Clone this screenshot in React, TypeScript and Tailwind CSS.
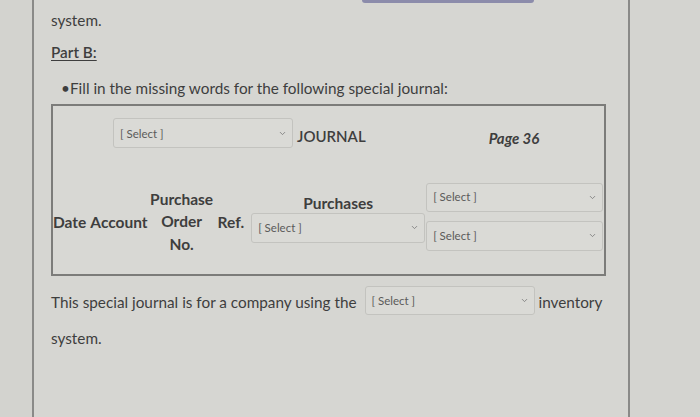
import React from 'react';
import { ChevronDown } from 'lucide-react';

function Select({ className = '' }: { className?: string }) {
  return (
    <div
      className={`flex items-center justify-between rounded-[3px] border border-[#c3c3bf] bg-[#dadad6] pl-[6px] pr-[5px] ${className}`}
    >
      <span className="text-[11.5px] font-normal text-[#5a5a5a]">[ Select ]</span>
      <ChevronDown className="h-[9px] w-[9px] text-[#7a7a7a]" strokeWidth={2.2} />
    </div>
  );
}

export default function App() {
  return (
    <div
      className="relative flex h-[417px] w-[700px] overflow-hidden bg-[#d6d6d2] text-[15.3px] text-[#3e3e3e]"
      style={{ fontFamily: 'Lato, "Open Sans", sans-serif' }}
    >
      {/* bottom edge of a button cut off at the top */}
      <div className="absolute left-[362px] top-0 h-[3px] w-[172px] rounded-b-sm bg-[#8c8cab]" />

      {/* left gutter */}
      <div className="w-[34px] shrink-0 border-r-2 border-[#8a8a88] bg-[#d3d3cf]" />

      {/* main column */}
      <div className="w-[596px] shrink-0 border-r-2 border-[#8a8a88] pl-[17px]">
        <p className="mt-[9px] leading-[22px]">system.</p>
        <p className="mt-[10px] font-semibold leading-[22px] underline underline-offset-2">Part B:</p>

        <div className="mt-[14px] flex items-center leading-[22px]">
          <span className="ml-[10px] w-[9px]">•</span>
          <span>Fill in the missing words for the following special journal:</span>
        </div>

        {/* journal box */}
        <div className="mt-[5px] h-[172px] w-[555px] border-2 border-[#7c7c7a] bg-[#d8d8d4]">
          <div className="flex items-center pt-[11px]">
            <Select className="ml-[60px] h-[30px] w-[180px]" />
            <span className="ml-[4px] mt-[5px] text-[15px] font-semibold">JOURNAL</span>
            <span className="ml-[123px] mt-[10px] text-[15px] font-bold italic">Page 36</span>
          </div>

          <div className="mt-[33px] flex items-start text-[15.5px] font-bold">
            <div className="mt-[28px] flex gap-[4px] leading-[22px]">
              <span>Date</span>
              <span>Account</span>
            </div>
            <div className="ml-[2px] mt-[5px] w-[64px] text-center leading-[22.5px]">
              Purchase
              <br />
              Order
              <br />
              No.
            </div>
            <span className="ml-[4px] mt-[28px] leading-[22px]">Ref.</span>
            <div className="ml-[7px] mt-[10px] flex w-[174px] flex-col items-center">
              <span className="leading-[20px]">Purchases</span>
              <Select className="h-[30px] w-[174px]" />
            </div>
            <div className="ml-[1px] flex flex-col gap-[9px]">
              <Select className="h-[29px] w-[177px]" />
              <Select className="h-[30px] w-[177px]" />
            </div>
          </div>
        </div>

        <div className="mt-[10px] flex items-center">
          <span className="mt-[4px]">This special journal is for a company using the</span>
          <Select className="ml-[8px] h-[29px] w-[170px]" />
          <span className="ml-[4px] mt-[4px]">inventory</span>
        </div>
        <p className="mt-[12px] leading-[22px]">system.</p>
      </div>

      {/* right gutter */}
      <div className="flex-1 bg-[#d4d4d0]" />
    </div>
  );
}
